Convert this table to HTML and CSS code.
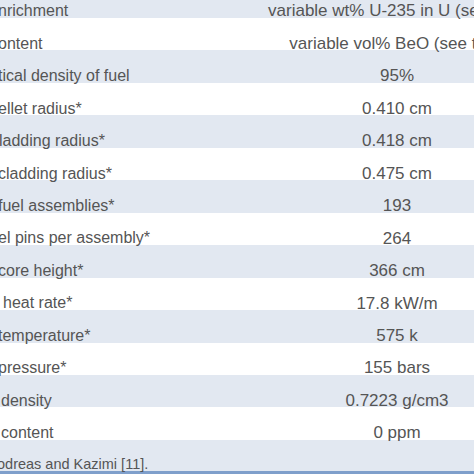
FILE: index.html
```html
<!DOCTYPE html>
<html>
<head>
<meta charset="utf-8">
<link rel="stylesheet" href="styles.css">
</head>
<body>
<div class="table">
  <div class="row shade"><div class="label">nrichment</div><div class="value">variable wt% U-235 in U (see text)</div></div>
  <div class="row"><div class="label">ontent</div><div class="value">variable vol% BeO (see text)</div></div>
  <div class="row shade"><div class="label">tical density of fuel</div><div class="value">95%</div></div>
  <div class="row"><div class="label">ellet radius*</div><div class="value">0.410 cm</div></div>
  <div class="row shade"><div class="label in2">ladding radius*</div><div class="value">0.418 cm</div></div>
  <div class="row"><div class="label">cladding radius*</div><div class="value">0.475 cm</div></div>
  <div class="row shade"><div class="label">fuel assemblies*</div><div class="value">193</div></div>
  <div class="row"><div class="label">el pins per assembly*</div><div class="value">264</div></div>
  <div class="row shade"><div class="label">core height*</div><div class="value">366 cm</div></div>
  <div class="row"><div class="label in5">heat rate*</div><div class="value">17.8 kW/m</div></div>
  <div class="row shade"><div class="label">temperature*</div><div class="value">575 k</div></div>
  <div class="row"><div class="label">pressure*</div><div class="value">155 bars</div></div>
  <div class="row shade"><div class="label in3">density</div><div class="value">0.7223 g/cm3</div></div>
  <div class="row"><div class="label in3">content</div><div class="value">0 ppm</div></div>
  <div class="row shade foot"><div class="note">odreas and Kazimi [11].</div></div>
</div>
</body>
</html>
```

FILE: styles.css
```css
html, body {
  margin: 0;
  padding: 0;
  overflow: hidden;
  background: #ffffff;
}
body {
  width: 474px;
  height: 474px;
  font-family: "Liberation Sans", Arial, Helvetica, sans-serif;
  color: #555555;
}
.table {
  width: 530px;
  margin-top: -14.46px;
  margin-left: -2px;
}
.row {
  display: grid;
  grid-template-columns: 268px 262px;
  height: 32.46px;
  background: #ffffff;
}
.row.shade {
  background: #e2e8f1;
}
.label,
.value,
.note {
  white-space: nowrap;
}
.label {
  font-size: 16px;
  line-height: 16px;
  padding-top: 17.7px;
}
.value {
  font-size: 17px;
  line-height: 17px;
  padding-top: 16.9px;
  text-align: center;
}
.in2 { text-indent: 1px; }
.in3 { text-indent: 3px; }
.in5 { text-indent: 5px; }
.foot {
  grid-template-columns: 530px;
  height: 31px;
  border-bottom: 4px solid #7f9fcb;
}
.note {
  font-size: 14.5px;
  line-height: 14.5px;
  padding-top: 17.3px;
  text-indent: -1px;
}
```
